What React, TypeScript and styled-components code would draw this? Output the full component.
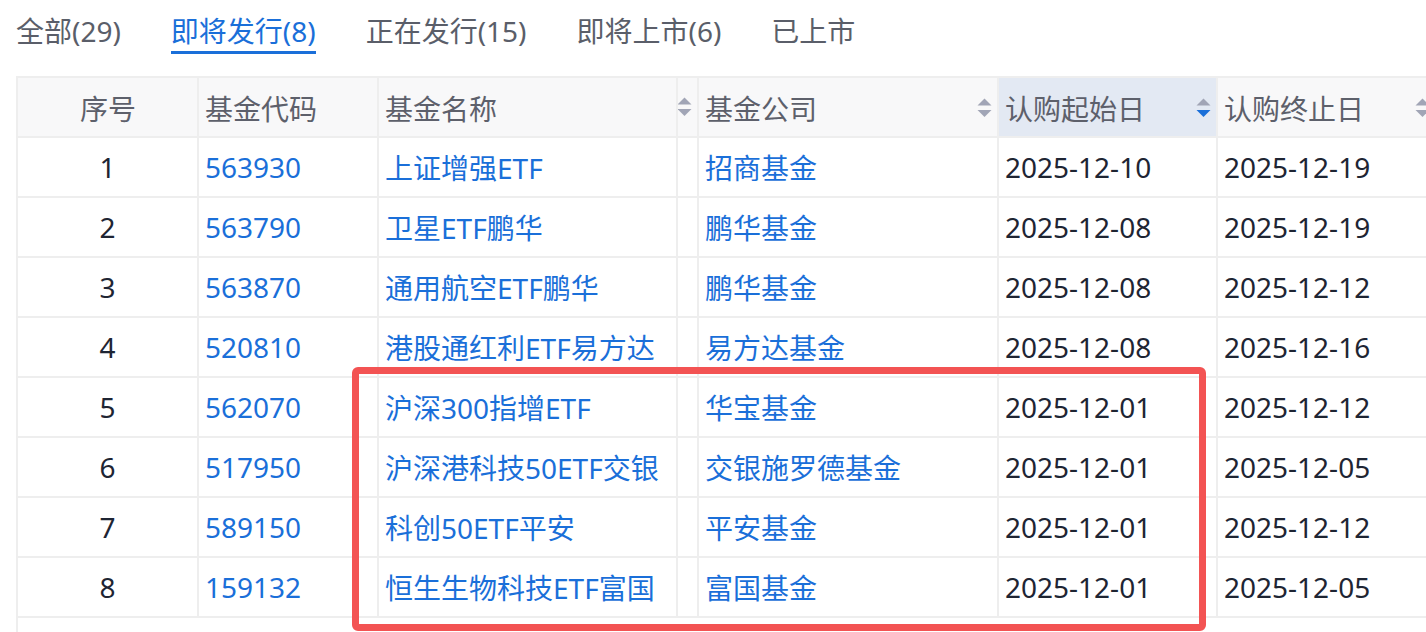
import React from 'react';
import styled, { createGlobalStyle } from 'styled-components';

const GlobalStyle = createGlobalStyle`
  html, body {
    margin: 0;
    padding: 0;
    overflow: hidden;
    background: #fff;
    font-family: "Noto Sans", "Noto Sans CJK SC", sans-serif;
  }
`;

const COLS = '181px 180px 299px 21px 300px 219px 219px';
const LINE = '#eeeeee';
const BLUE = '#1a6fd9';

const Page = styled.div`
  padding: 11px 0 0 16px;
`;

const Tabs = styled.div`
  display: flex;
  gap: 50px;
`;

const Tab = styled.div<{ $active?: boolean }>`
  font-size: 28px;
  line-height: 40px;
  color: ${(p) => (p.$active ? BLUE : '#5a5e69')};
  border-bottom: 3px solid ${(p) => (p.$active ? BLUE : 'transparent')};
  white-space: nowrap;
  cursor: pointer;
`;

const Table = styled.div`
  position: relative;
  margin-top: 22px;
  width: max-content;
  border-top: 2px solid ${LINE};
  border-left: 2px solid ${LINE};
  font-size: 28px;
`;

const Row = styled.div`
  display: grid;
  grid-template-columns: ${COLS};
  height: 60px;
`;

const HeadCell = styled.div<{ $active?: boolean; $center?: boolean }>`
  display: flex;
  align-items: center;
  justify-content: ${(p) => (p.$center ? 'center' : 'space-between')};
  gap: 6px;
  padding: 2px 5px 0 6px;
  background: ${(p) => (p.$active ? '#e3e9f3' : '#f8f8f9')};
  border-right: 2px solid ${LINE};
  border-bottom: 2px solid ${LINE};
  color: #5d606b;
  white-space: nowrap;
  overflow: hidden;
`;

const SortSlot = styled(HeadCell)`
  justify-content: flex-end;
  padding: 0 5px 0 0;
`;

const Cell = styled.div<{ $kind?: 'num' | 'link' | 'date' | 'blank' }>`
  display: flex;
  align-items: center;
  justify-content: ${(p) => (p.$kind === 'num' ? 'center' : 'flex-start')};
  padding: 0 6px;
  background: #fff;
  border-right: 2px solid ${LINE};
  border-bottom: 2px solid ${LINE};
  color: ${(p) => (p.$kind === 'link' ? BLUE : '#1e2533')};
  white-space: nowrap;
  overflow: hidden;
  cursor: ${(p) => (p.$kind === 'link' ? 'pointer' : 'default')};
`;

const Footer = styled.div`
  height: 30px;
`;

const Highlight = styled.div`
  position: absolute;
  left: 334px;
  top: 289px;
  width: 854px;
  height: 264px;
  box-sizing: border-box;
  border: 7px solid #f35353;
  border-radius: 6px;
  pointer-events: none;
`;

const Sorter = ({ dir }: { dir?: 'up' | 'down' }) => (
  <svg width="15" height="20" viewBox="0 0 15 20" style={{ flexShrink: 0 }}>
    <path d="M7.5 0.5 L14.5 7.5 H0.5 Z" fill={dir === 'up' ? BLUE : '#a1a5b6'} />
    <path d="M0.5 12 H14.5 L7.5 19 Z" fill={dir === 'down' ? BLUE : '#a1a5b6'} />
  </svg>
);

const tabs = [
  { label: '全部(29)' },
  { label: '即将发行(8)', active: true },
  { label: '正在发行(15)' },
  { label: '即将上市(6)' },
  { label: '已上市' },
];

const rows = [
  ['563930', '上证增强ETF', '招商基金', '2025-12-10', '2025-12-19'],
  ['563790', '卫星ETF鹏华', '鹏华基金', '2025-12-08', '2025-12-19'],
  ['563870', '通用航空ETF鹏华', '鹏华基金', '2025-12-08', '2025-12-12'],
  ['520810', '港股通红利ETF易方达', '易方达基金', '2025-12-08', '2025-12-16'],
  ['562070', '沪深300指增ETF', '华宝基金', '2025-12-01', '2025-12-12'],
  ['517950', '沪深港科技50ETF交银', '交银施罗德基金', '2025-12-01', '2025-12-05'],
  ['589150', '科创50ETF平安', '平安基金', '2025-12-01', '2025-12-12'],
  ['159132', '恒生生物科技ETF富国', '富国基金', '2025-12-01', '2025-12-05'],
];

export default function App() {
  return (
    <Page>
      <GlobalStyle />
      <Tabs>
        {tabs.map((t) => (
          <Tab key={t.label} $active={t.active}>
            {t.label}
          </Tab>
        ))}
      </Tabs>

      <Table>
        <Row>
          <HeadCell $center>序号</HeadCell>
          <HeadCell>基金代码</HeadCell>
          <HeadCell>基金名称</HeadCell>
          <SortSlot>
            <Sorter />
          </SortSlot>
          <HeadCell>
            基金公司
            <Sorter />
          </HeadCell>
          <HeadCell $active>
            认购起始日
            <Sorter dir="down" />
          </HeadCell>
          <HeadCell>
            认购终止日
            <Sorter />
          </HeadCell>
        </Row>

        {rows.map(([code, name, company, start, end], i) => (
          <Row key={code}>
            <Cell $kind="num">{i + 1}</Cell>
            <Cell $kind="link">{code}</Cell>
            <Cell $kind="link">{name}</Cell>
            <Cell $kind="blank" />
            <Cell $kind="link">{company}</Cell>
            <Cell $kind="date">{start}</Cell>
            <Cell $kind="date">{end}</Cell>
          </Row>
        ))}
        <Footer />

        <Highlight />
      </Table>
    </Page>
  );
}
